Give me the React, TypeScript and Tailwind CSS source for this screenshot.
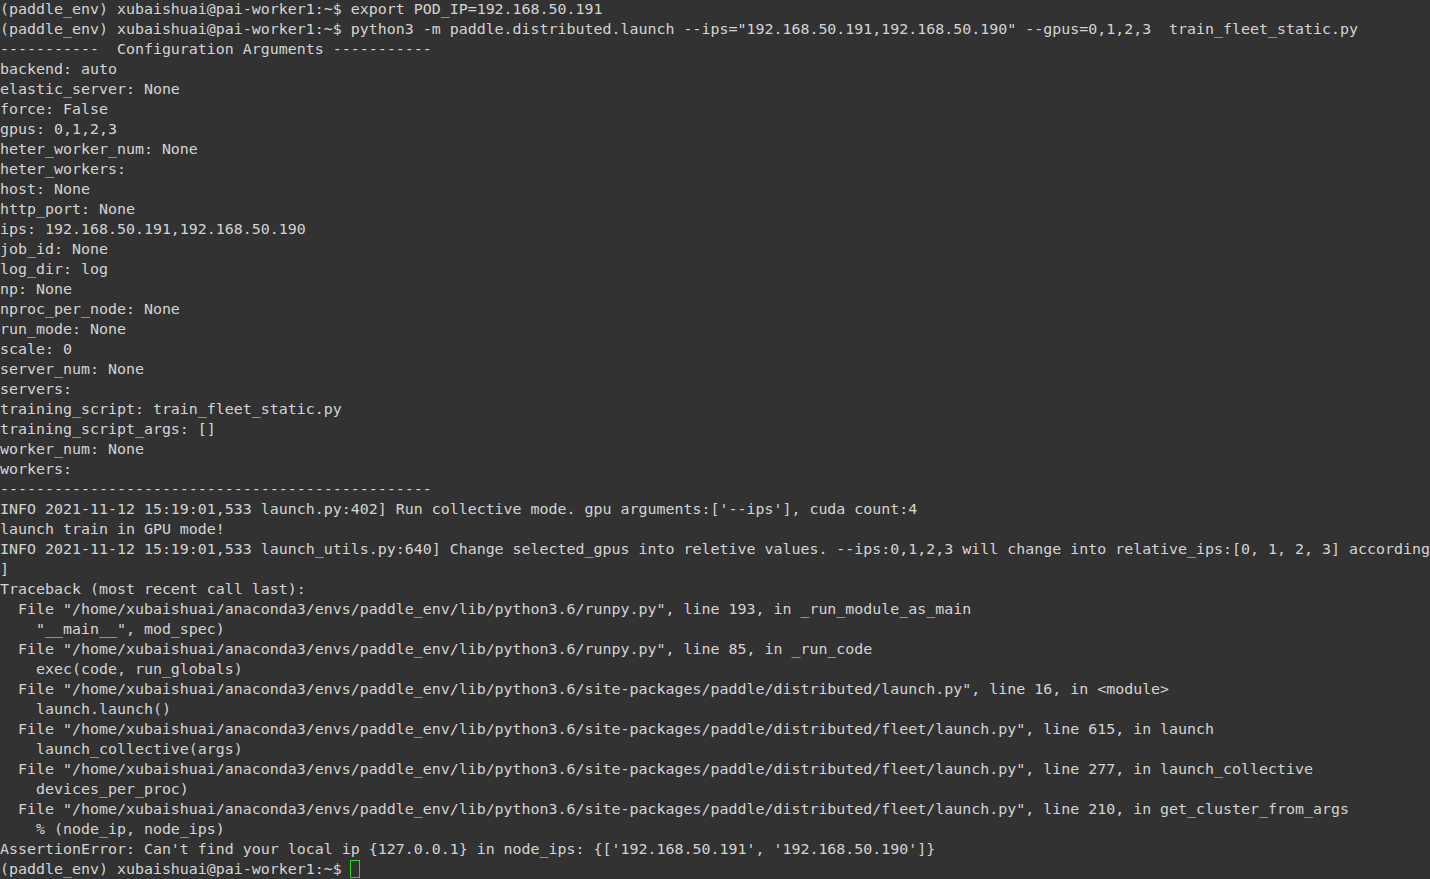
const lines = [
  '(paddle_env) xubaishuai@pai-worker1:~$ export POD_IP=192.168.50.191',
  '(paddle_env) xubaishuai@pai-worker1:~$ python3 -m paddle.distributed.launch --ips="192.168.50.191,192.168.50.190" --gpus=0,1,2,3  train_fleet_static.py',
  '-----------  Configuration Arguments -----------',
  'backend: auto',
  'elastic_server: None',
  'force: False',
  'gpus: 0,1,2,3',
  'heter_worker_num: None',
  'heter_workers:',
  'host: None',
  'http_port: None',
  'ips: 192.168.50.191,192.168.50.190',
  'job_id: None',
  'log_dir: log',
  'np: None',
  'nproc_per_node: None',
  'run_mode: None',
  'scale: 0',
  'server_num: None',
  'servers:',
  'training_script: train_fleet_static.py',
  'training_script_args: []',
  'worker_num: None',
  'workers:',
  '------------------------------------------------',
  "INFO 2021-11-12 15:19:01,533 launch.py:402] Run collective mode. gpu arguments:['--ips'], cuda count:4",
  'launch train in GPU mode!',
  'INFO 2021-11-12 15:19:01,533 launch_utils.py:640] Change selected_gpus into reletive values. --ips:0,1,2,3 will change into relative_ips:[0, 1, 2, 3] according',
  ']',
  'Traceback (most recent call last):',
  '  File "/home/xubaishuai/anaconda3/envs/paddle_env/lib/python3.6/runpy.py", line 193, in _run_module_as_main',
  '    "__main__", mod_spec)',
  '  File "/home/xubaishuai/anaconda3/envs/paddle_env/lib/python3.6/runpy.py", line 85, in _run_code',
  '    exec(code, run_globals)',
  '  File "/home/xubaishuai/anaconda3/envs/paddle_env/lib/python3.6/site-packages/paddle/distributed/launch.py", line 16, in <module>',
  '    launch.launch()',
  '  File "/home/xubaishuai/anaconda3/envs/paddle_env/lib/python3.6/site-packages/paddle/distributed/fleet/launch.py", line 615, in launch',
  '    launch_collective(args)',
  '  File "/home/xubaishuai/anaconda3/envs/paddle_env/lib/python3.6/site-packages/paddle/distributed/fleet/launch.py", line 277, in launch_collective',
  '    devices_per_proc)',
  '  File "/home/xubaishuai/anaconda3/envs/paddle_env/lib/python3.6/site-packages/paddle/distributed/fleet/launch.py", line 210, in get_cluster_from_args',
  '    % (node_ip, node_ips)',
  "AssertionError: Can't find your local ip {127.0.0.1} in node_ips: {['192.168.50.191', '192.168.50.190']}",
]

export default function App() {
  return (
    <div className="h-[879px] w-[1430px] overflow-hidden bg-[#323232] text-[#d4d4d4] font-['DejaVu_Sans_Mono','Liberation_Mono',monospace] text-[14.95px] leading-[20px]">
      <div className="-mt-[1px]">
        {lines.map((line, i) => (
          <div key={i} className="h-5 whitespace-pre">
            {line}
          </div>
        ))}
        <div className="flex h-5 items-center whitespace-pre">
          <span>(paddle_env) xubaishuai@pai-worker1:~$ </span>
          <span className="ml-[-1px] h-[18px] w-[10px] border border-[#22dd22]" />
        </div>
      </div>
    </div>
  )
}
